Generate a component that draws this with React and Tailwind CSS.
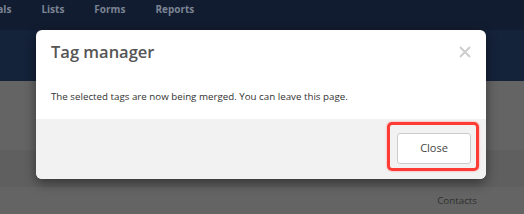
import React from "react";

export default function App() {
  const links = ["Deals", "Lists", "Forms", "Reports"];

  return (
    <div className="relative w-[524px] h-[214px] overflow-hidden bg-[#646464] font-['Open_Sans',sans-serif]">
      {/* dimmed page behind the dialog */}
      <nav className="h-[30px] bg-[#121c30] pt-[2px]">
        <div className="flex items-center gap-[30px] -ml-[16px] text-[10px] font-bold text-[#7b8494]">
          {links.map((l) => (
            <span key={l}>{l}</span>
          ))}
        </div>
      </nav>
      <div className="h-[51px] bg-[#14223a]" />
      <div className="h-[69px] bg-[#646464]" />
      <div className="h-[37px] bg-[#5f5f5f]" />
      <div className="h-[27px] bg-[#646464] flex justify-end items-center pr-[47px] pt-[1px]">
        <span className="text-[9.8px] text-[#2f2f2f]">Contacts</span>
      </div>

      {/* modal */}
      <div className="absolute left-[36px] top-[30px] w-[450px] rounded-[6px] bg-white shadow-[0_4px_12px_rgba(0,0,0,0.45)] overflow-hidden">
        <div className="relative h-[89px] px-[15px]">
          <h2 className="pt-[10px] text-[16.5px] leading-[24px] font-semibold text-[#555]">Tag manager</h2>
          <button className="absolute right-[15px] top-[16px] text-[#cccccc]">
            <svg width="12" height="12" viewBox="0 0 12 12" fill="none" stroke="currentColor" strokeWidth="1.8">
              <path d="M1 1l10 10M11 1L1 11" />
            </svg>
          </button>
          <p className="mt-[26px] text-[9.75px] leading-[14px] text-[#333]">
            The selected tags are now being merged. You can leave this page.
          </p>
        </div>
        <div className="h-[60px] bg-[#f2f2f2] flex justify-end items-start pt-[3px] pr-[7px]">
          <div className="rounded-[5px] border-[3px] border-[#ff3b35] pt-[8px] pb-[4px] pl-[7px] pr-[5px] shadow-[0_0_2px_rgba(255,59,53,0.6)]">
            <button className="block w-[74px] h-[31px] rounded-[3px] border border-[#cccccc] bg-white text-[11px] text-[#444]">
              Close
            </button>
          </div>
        </div>
      </div>
    </div>
  );
}
